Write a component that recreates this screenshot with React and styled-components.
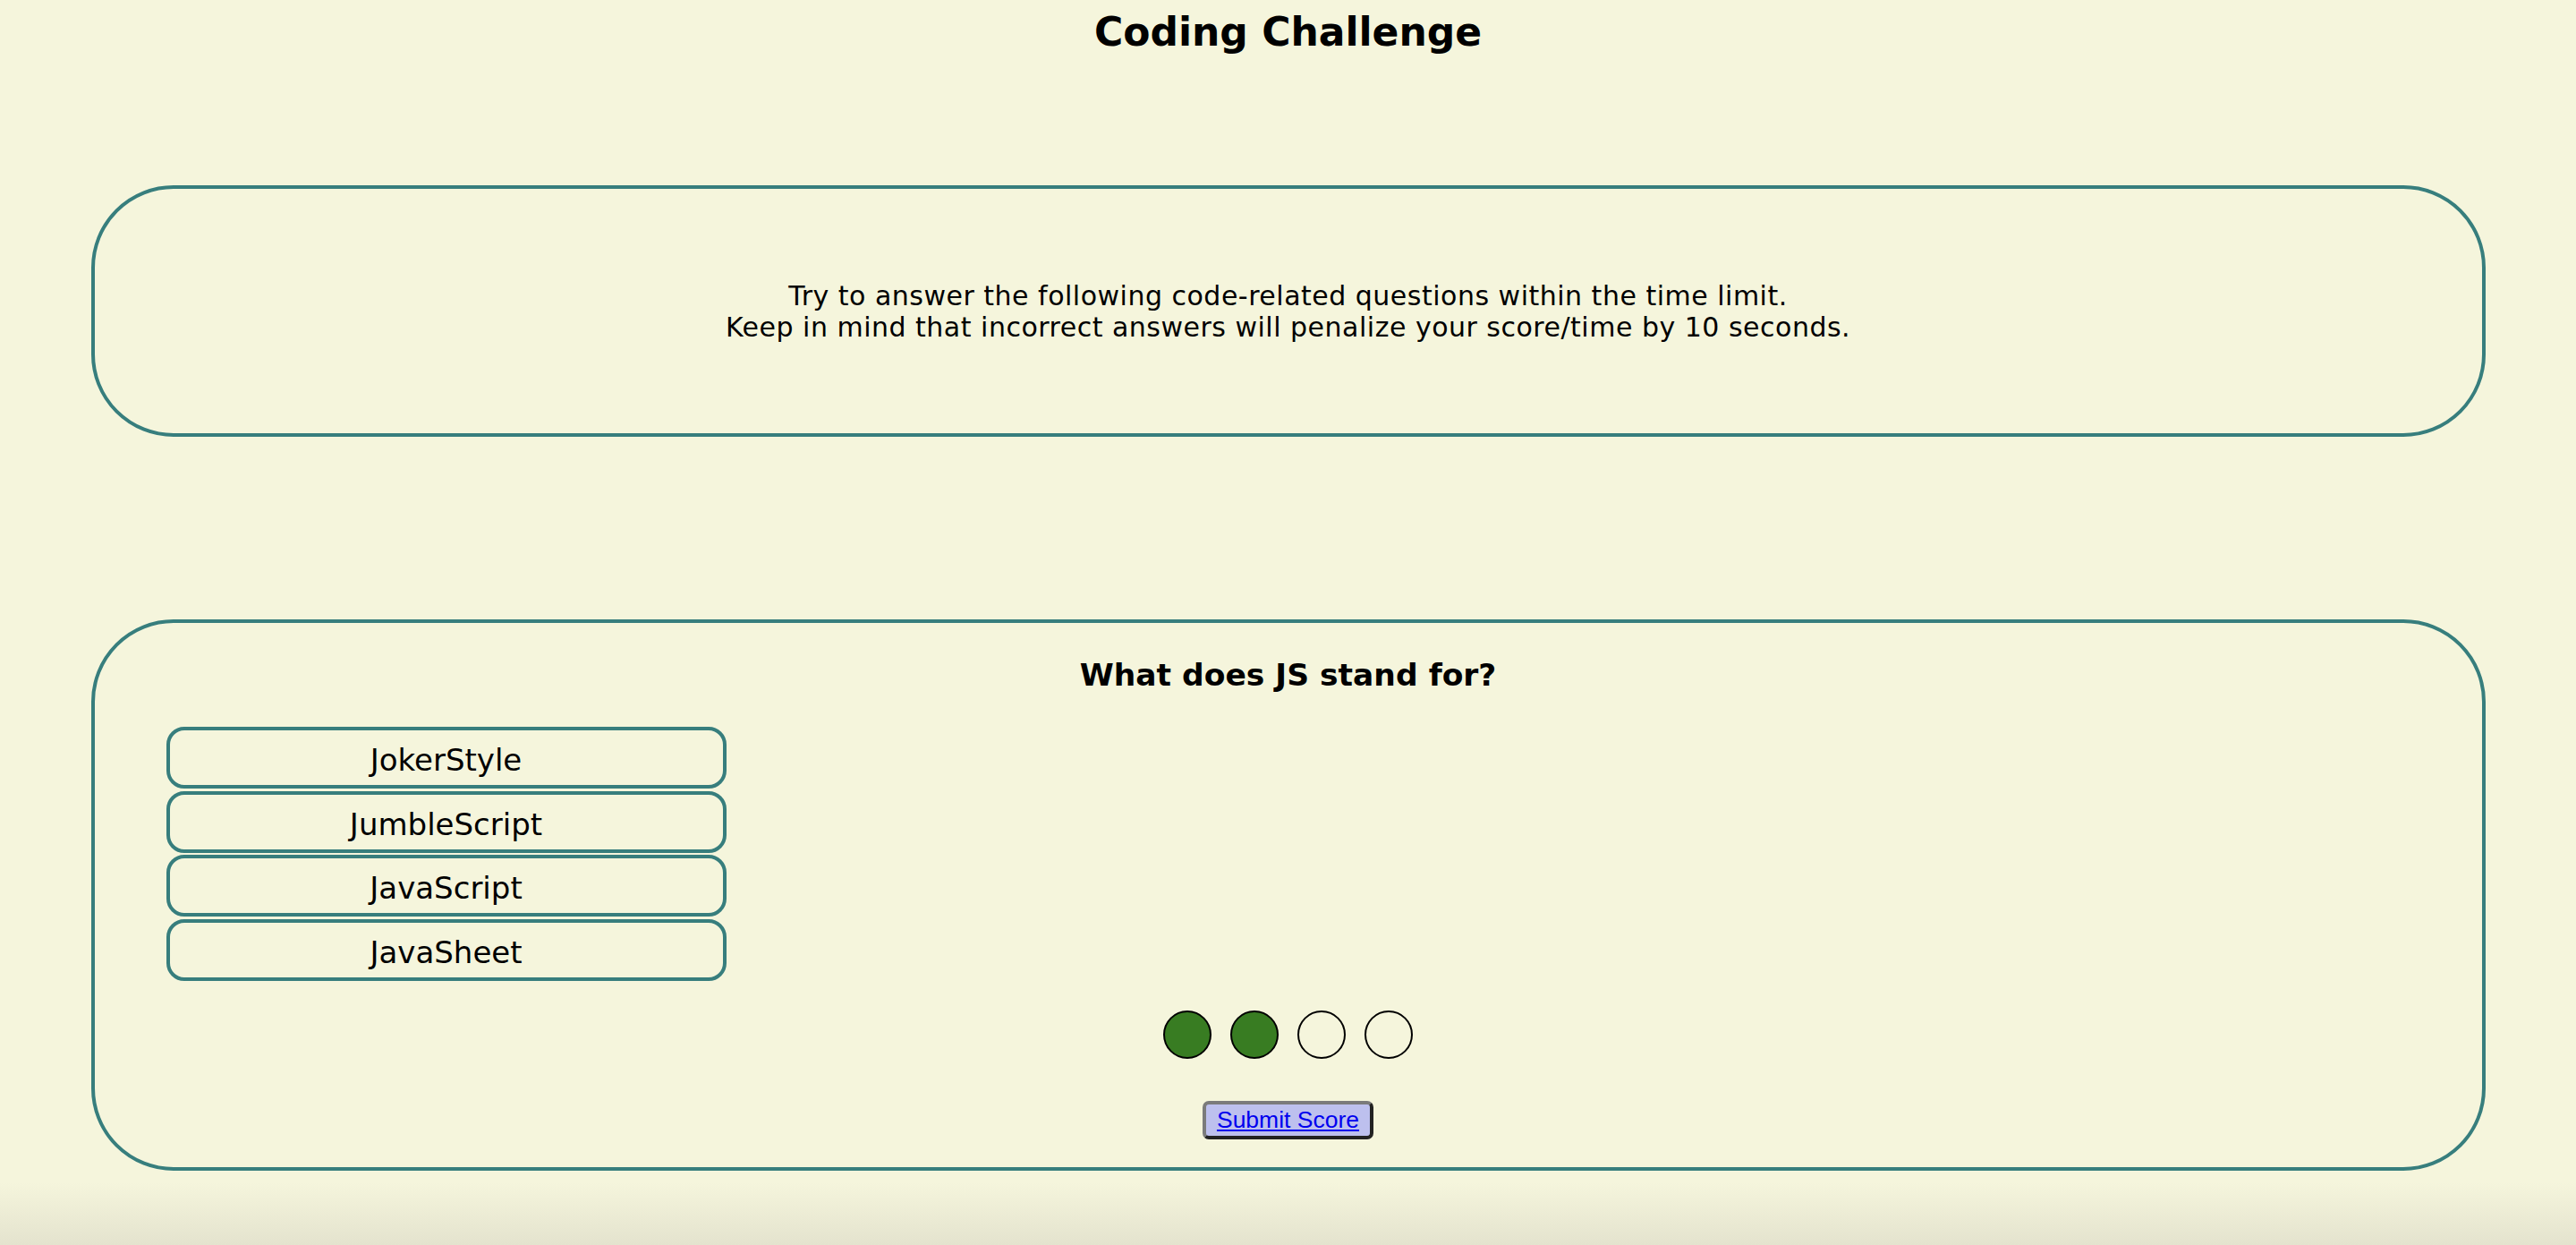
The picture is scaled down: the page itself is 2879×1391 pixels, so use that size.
import React from 'react'
import styled, { createGlobalStyle } from 'styled-components'

const GlobalStyle = createGlobalStyle`
    html, body {
        margin: 0;
        padding: 0;
    }
    body {
        min-height: 100vh;
        background: linear-gradient(to bottom, #f5f5dc calc(100% - 70px), #e4e3ce 100%);
        font-family: "DejaVu Sans", "Open Sans", sans-serif;
        color: #000;
    }
`

const Page = styled.div`
    display: flex;
    flex-direction: column;
    align-items: center;
    padding-bottom: 40px;
`

const Title = styled.h1`
    margin: 10px 0 0;
    font-size: 44px;
    font-weight: bold;
    line-height: 1.164;
`

const Card = styled.section`
    box-sizing: border-box;
    width: 2676px;
    border: 4px solid #377e7d;
    border-radius: 92px;
    margin-top: ${props => props.$gap}px;
`

const IntroCard = styled(Card)`
    height: 281px;
    display: flex;
    align-items: center;
    justify-content: center;
`

const Intro = styled.p`
    margin: 0;
    font-size: 30px;
    letter-spacing: 0.5px;
    line-height: 35px;
    text-align: center;
`

const QuizCard = styled(Card)`
    display: flex;
    flex-direction: column;
    padding: 38px 0 31px;
`

const Question = styled.h2`
    margin: 0;
    text-align: center;
    font-size: 34.5px;
    font-weight: bold;
    line-height: 1.164;
`

const Answers = styled.div`
    display: flex;
    flex-direction: column;
    gap: 2.5px;
    margin: 38px 0 0 80px;
`

const Answer = styled.button`
    box-sizing: border-box;
    width: 626px;
    height: 69px;
    padding: 13px 0 8px;
    border: 4px solid #377e7d;
    border-radius: 20px;
    background: transparent;
    font-family: "DejaVu Sans", sans-serif;
    font-size: 34px;
    line-height: 40px;
    color: #000;
    text-align: center;
    cursor: pointer;
`

const Progress = styled.div`
    display: flex;
    justify-content: center;
    gap: 21px;
    margin-top: 33px;
`

const Dot = styled.span`
    box-sizing: border-box;
    width: 54px;
    height: 54px;
    border: 2px solid #000;
    border-radius: 50%;
    background: ${props => props.$done ? '#387c22' : 'transparent'};
`

const SubmitRow = styled.div`
    display: flex;
    justify-content: center;
    margin-top: 47px;
`

const SubmitButton = styled.button`
    box-sizing: border-box;
    height: 43px;
    padding: 0 12px;
    border: 4px solid;
    border-color: #7b7b7b #222 #222 #7b7b7b;
    border-radius: 7px;
    background: #bdc0ee;
    cursor: pointer;
`

const SubmitLink = styled.a`
    font-family: "Liberation Sans", Arial, sans-serif;
    font-size: 26.5px;
    line-height: 30px;
    color: #0000ee;
    text-decoration: underline;
`

const answers = ['JokerStyle', 'JumbleScript', 'JavaScript', 'JavaSheet']
const progress = [true, true, false, false]

export default function App(){
    return(
        <>
            <GlobalStyle />
            <Page>
                <Title>Coding Challenge</Title>
                <IntroCard $gap={146}>
                    <Intro>
                        Try to answer the following code-related questions within the time limit.
                        <br />
                        Keep in mind that incorrect answers will penalize your score/time by 10 seconds.
                    </Intro>
                </IntroCard>
                <QuizCard $gap={204}>
                    <Question>What does JS stand for?</Question>
                    <Answers>
                        {
                            answers.map((answer) => (
                                <Answer key={answer}>{answer}</Answer>
                            ))
                        }
                    </Answers>
                    <Progress>
                        {
                            progress.map((done, index) => (
                                <Dot key={index} $done={done}></Dot>
                            ))
                        }
                    </Progress>
                    <SubmitRow>
                        <SubmitButton>
                            <SubmitLink href="#">Submit Score</SubmitLink>
                        </SubmitButton>
                    </SubmitRow>
                </QuizCard>
            </Page>
        </>
    )
}
